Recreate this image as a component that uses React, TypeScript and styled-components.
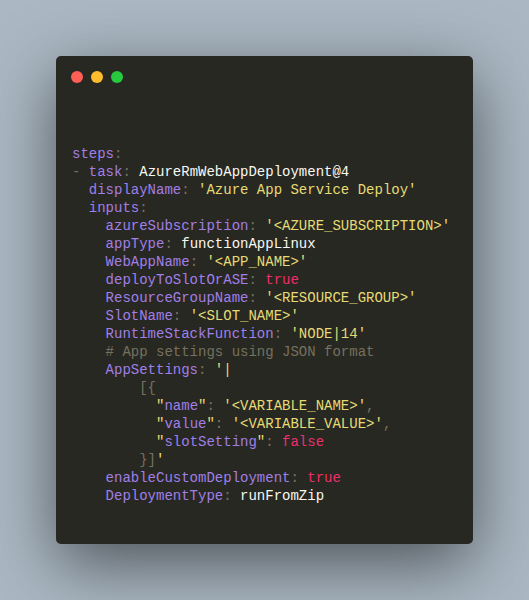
import React from "react";
import styled, { createGlobalStyle } from "styled-components";

const Global = createGlobalStyle`
  html, body { margin: 0; padding: 0; background: #abb8c3; }
  #root { width: 529px; height: 600px; }
`;

const Page = styled.div`
  box-sizing: border-box;
  width: 529px;
  height: 600px;
  padding: 56px;
  background: #abb8c3;
`;

const Window = styled.div`
  box-sizing: border-box;
  width: 417px;
  height: 488px;
  background: #272822;
  border-radius: 5px;
  box-shadow: 0 20px 68px rgba(0, 0, 0, 0.55);
  display: flex;
  flex-direction: column;
`;

const Header = styled.div`
  display: flex;
  gap: 8px;
  padding: 15px 0 0 15px;
`;

const Dot = styled.span<{ $c: string }>`
  width: 12px;
  height: 12px;
  border-radius: 50%;
  background: ${(p) => p.$c};
`;

const Code = styled.pre`
  margin: 0;
  padding: 62px 0 0 16px;
  font-family: "Liberation Mono", "Courier New", monospace;
  font-size: 14px;
  line-height: 18px;
  color: #f8f8f2;
  white-space: pre;
`;

const Line = styled.div`
  height: 18px;
`;

const colors: Record<string, string> = {
  k: "#a27fe6",
  s: "#e6db74",
  b: "#eb2f6c",
  p: "#75715e",
  c: "#75715e",
  t: "#f8f8f2",
};

const Tok = styled.span<{ $t: string }>`
  color: ${(p) => colors[p.$t]};
`;

type T = [string, string];
const lines: T[][] = [
  [["k", "steps"], ["p", ":"]],
  [["p", "- "], ["k", "task"], ["p", ": "], ["t", "AzureRmWebAppDeployment@4"]],
  [["t", "  "], ["k", "displayName"], ["p", ": "], ["s", "'Azure App Service Deploy'"]],
  [["t", "  "], ["k", "inputs"], ["p", ":"]],
  [["t", "    "], ["k", "azureSubscription"], ["p", ": "], ["s", "'<AZURE_SUBSCRIPTION>'"]],
  [["t", "    "], ["k", "appType"], ["p", ": "], ["t", "functionAppLinux"]],
  [["t", "    "], ["k", "WebAppName"], ["p", ": "], ["s", "'<APP_NAME>'"]],
  [["t", "    "], ["k", "deployToSlotOrASE"], ["p", ": "], ["b", "true"]],
  [["t", "    "], ["k", "ResourceGroupName"], ["p", ": "], ["s", "'<RESOURCE_GROUP>'"]],
  [["t", "    "], ["k", "SlotName"], ["p", ": "], ["s", "'<SLOT_NAME>'"]],
  [["t", "    "], ["k", "RuntimeStackFunction"], ["p", ": "], ["s", "'NODE|14'"]],
  [["t", "    "], ["c", "# App settings using JSON format"]],
  [["t", "    "], ["k", "AppSettings"], ["p", ": "], ["s", "'|"]],
  [["t", "        "], ["p", "[{"]],
  [["t", "          "], ["s", "\""], ["k", "name"], ["s", "\""], ["p", ": "], ["s", "'<VARIABLE_NAME>'"], ["p", ","]],
  [["t", "          "], ["s", "\""], ["k", "value"], ["s", "\""], ["p", ": "], ["s", "'<VARIABLE_VALUE>'"], ["p", ","]],
  [["t", "          "], ["s", "\""], ["k", "slotSetting"], ["s", "\""], ["p", ": "], ["b", "false"]],
  [["t", "        "], ["p", "}]"], ["s", "'"]],
  [["t", "    "], ["k", "enableCustomDeployment"], ["p", ": "], ["b", "true"]],
  [["t", "    "], ["k", "DeploymentType"], ["p", ": "], ["t", "runFromZip"]],
];

export default function App() {
  return (
    <Page>
      <Global />
      <Window>
        <Header>
          <Dot $c="#ff5f56" />
          <Dot $c="#ffbd2e" />
          <Dot $c="#27c93f" />
        </Header>
        <Code>
          {lines.map((l, i) => (
            <Line key={i}>
              {l.map(([t, s], j) => (
                <Tok key={j} $t={t}>
                  {s}
                </Tok>
              ))}
            </Line>
          ))}
        </Code>
      </Window>
    </Page>
  );
}
